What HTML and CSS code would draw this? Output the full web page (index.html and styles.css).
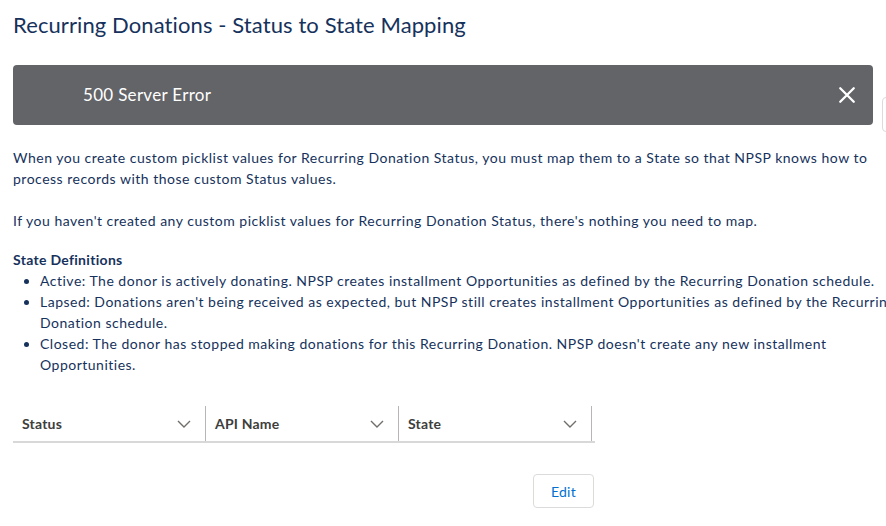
FILE: index.html
```html
<!DOCTYPE html>
<html lang="en">
<head>
<meta charset="utf-8">
<title>Recurring Donations - Status to State Mapping</title>
<link rel="stylesheet" href="styles.css">
</head>
<body>
<div class="page">
  <h1 class="title">Recurring Donations - Status to State Mapping</h1>

  <div class="toast">
    <span class="toast-text">500 Server Error</span>
    <button class="toast-close" aria-label="Close">
      <svg viewBox="0 0 20 20" width="18" height="18"><path d="M2.5 2.5 L17.5 17.5 M17.5 2.5 L2.5 17.5" stroke="#fff" stroke-width="2.6" stroke-linecap="round" fill="none"/></svg>
    </button>
  </div>

  <div class="content">
    <p class="para">When you create custom picklist values for Recurring Donation Status, you must map them to a State so that NPSP knows how to process records with those custom Status values.</p>
    <p class="para">If you haven't created any custom picklist values for Recurring Donation Status, there's nothing you need to map.</p>
    <p class="defs-title">State Definitions</p>
    <ul class="defs">
      <li>Active: The donor is actively donating. NPSP creates installment Opportunities as defined by the Recurring Donation schedule.</li>
      <li>Lapsed: Donations aren't being received as expected, but NPSP still creates installment Opportunities as defined by the Recurring Donation schedule.</li>
      <li>Closed: The donor has stopped making donations for this Recurring Donation. NPSP doesn't create any new installment Opportunities.</li>
    </ul>
  </div>

  <div class="table">
    <div class="th">
      <span class="th-label">Status</span>
      <svg class="chev" viewBox="0 0 14 8" width="14" height="8"><path d="M1 1 L7 7 L13 1" stroke="#706e6b" stroke-width="1.4" fill="none"/></svg>
    </div>
    <div class="th">
      <span class="th-label">API Name</span>
      <svg class="chev" viewBox="0 0 14 8" width="14" height="8"><path d="M1 1 L7 7 L13 1" stroke="#706e6b" stroke-width="1.4" fill="none"/></svg>
    </div>
    <div class="th">
      <span class="th-label">State</span>
      <svg class="chev" viewBox="0 0 14 8" width="14" height="8"><path d="M1 1 L7 7 L13 1" stroke="#706e6b" stroke-width="1.4" fill="none"/></svg>
    </div>
  </div>

  <div class="actions">
    <button class="btn">Edit</button>
  </div>
</div>
<div class="edge-box"></div>
</body>
</html>
```

FILE: styles.css
```css
html, body {
  margin: 0;
  padding: 0;
  background: #ffffff;
}
body {
  font-family: Lato, "Open Sans", Arial, sans-serif;
  color: #16325c;
  font-size: 14px;
  line-height: 21px;
  overflow: hidden;
  width: 886px;
  height: 526px;
  position: relative;
}
.page {
  padding: 0 13px;
  width: 860px;
}
.title {
  margin: 0;
  padding-top: 10px;
  font-size: 22px;
  line-height: 30px;
  font-weight: 400;
  letter-spacing: 0.1px;
  color: #16325c;
}
.toast {
  margin-top: 25px;
  height: 60px;
  background: #636468;
  border-radius: 4px;
  display: flex;
  align-items: center;
  justify-content: space-between;
  padding: 0 17px 0 70px;
  box-sizing: border-box;
}
.toast-text {
  color: #ffffff;
  font-size: 17px;
  line-height: 24px;
  letter-spacing: 0.3px;
}
.toast-close {
  background: none;
  border: 0;
  padding: 0;
  margin: 0;
  width: 18px;
  height: 18px;
  display: flex;
}
.content {
  margin-top: 22px;
  width: 900px;
  letter-spacing: 0.5px;
}
.para {
  margin: 0 0 21px 0;
}
.defs-title {
  margin: -3px 0 0 0;
  font-weight: 700;
  letter-spacing: 0.3px;
}
.defs {
  margin: 0;
  padding-left: 27px;
}
.table {
  margin-top: 31px;
  width: 582px;
  display: flex;
  border-bottom: 2px solid #d8d8d8;
}
.th {
  width: 193px;
  height: 35px;
  box-sizing: border-box;
  border-right: 1px solid #b8b6b4;
  display: flex;
  align-items: center;
  justify-content: space-between;
  padding: 0 14px 0 9px;
}
.th-label {
  font-weight: 700;
  color: #3e3e3c;
  font-size: 14px;
  letter-spacing: 0.2px;
}
.chev {
  display: block;
}
.actions {
  width: 582px;
  display: flex;
  justify-content: flex-end;
  margin-top: 31px;
}
.btn {
  font-family: inherit;
  font-size: 14px;
  letter-spacing: 0.3px;
  color: #0070d2;
  background: #fff;
  border: 1px solid #dddbda;
  border-radius: 4px;
  width: 61px;
  height: 34px;
  padding: 0;
  margin-right: 1px;
}
.edge-box {
  position: absolute;
  left: 882px;
  top: 97px;
  width: 30px;
  height: 33px;
  border: 1px solid #dddbda;
  border-radius: 4px;
  background: #fff;
}
```
